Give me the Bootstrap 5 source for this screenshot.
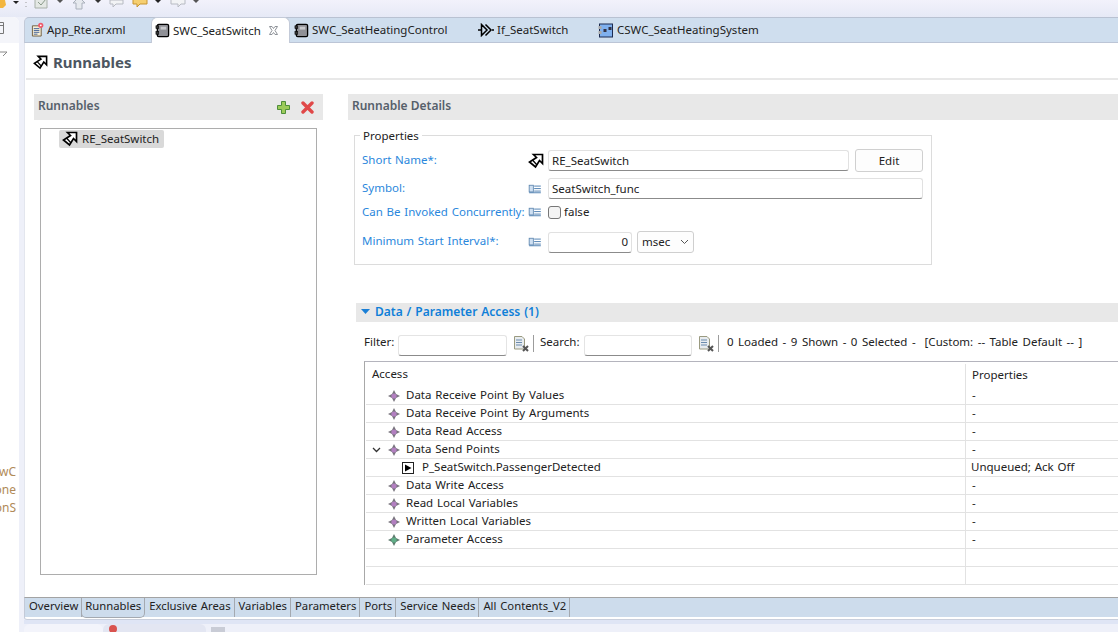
<!DOCTYPE html>
<html lang="en"><head><meta charset="utf-8"><title>Runnables</title>
<link href="https://cdn.jsdelivr.net/npm/bootstrap@5.3.0/dist/css/bootstrap.min.css" rel="stylesheet">
<style>
html,body{height:632px;overflow:hidden}
body{background:#eef0f9;font-family:"Noto Sans","Liberation Sans",sans-serif;font-size:11.5px;word-spacing:.8px;line-height:18px;color:#222;width:1118px}
.tool-strip{height:17px;background:linear-gradient(#f2f2fb,#e6e9f6);overflow:hidden}
.tool-strip svg{display:block;flex:none}
.work{height:615px}
.side{width:19px;background:#fff;border-radius:0 6px 0 0;flex:none}
.side-head{height:26px;background:#f4f5fa;border-radius:0 6px 0 0;padding-top:5px}
.side-txt{color:#b08a58;margin-top:406px;font-size:12px;word-spacing:0}
.side-txt div{width:16px;overflow:hidden;white-space:nowrap;display:flex;justify-content:flex-end}
.editor{margin-left:5px;width:1094px;flex:none}
.e-tabs{height:26px;background:#cfdeee;border-top:1px solid #b9c2d2;border-bottom:1px solid #bcc5d6;border-left:1px solid #c3cad8;border-radius:5px 0 0 0;white-space:nowrap}
.e-tab{display:flex;align-items:center;height:24px;flex:none;gap:3px}
.e-tab.on{background:#fff;height:26px;margin-top:-1px;border:1px solid #c3cad8;border-bottom:0;border-radius:6px 6px 0 0}
.t1{width:126px;padding-left:6px}
.t2{width:139px;padding-left:3px}
.t3{width:188px;padding-left:4px}
.t4{width:120px}
.t5{width:200px}
.e-body{background:#fff;height:554px;border-left:1px solid #e3e6ee}
.page-head{height:37px;margin-left:1px;padding:3px 0 0 7px;border-bottom:2px solid #e8e8e8;gap:5px}
.page-title{font-size:15px;font-weight:700;color:#4c5661;line-height:20px;word-spacing:0}
.columns{padding-left:9px;padding-top:14px}
.col-left{width:289px;flex:none}
.col-right{width:770px;margin-left:25px;flex:none}
.sect-bar{height:26px;background:#e8e8e8;padding:0 9px 2px 4px;font-weight:600;color:#56606b;font-size:12px;word-spacing:0}
.bar-tools{gap:11px;padding-top:2px}
.tree-box{margin:8px 6px 0;height:447px;border:1px solid #adadad;padding:1px 18px}
.tree-sel{display:inline-flex;align-items:center;gap:4px;background:#d9d9d9;border-radius:2px;height:18px;padding:0 5px 0 3px}
.grp{position:relative;margin:15px 0 0 6px;width:578px;height:130px;border:1px solid #dcdcdc;padding:13px 8px 0 7px}
.grp-title{position:absolute;left:5px;top:-8px;background:#fff;padding:0 3px;line-height:16px}
.p-row{display:flex;align-items:center}
.p-lab{width:166px;color:#2a87dc;flex:none;white-space:nowrap;padding-bottom:2px}
.p-lab.flat{padding-bottom:0}
.p-ic{width:20px;flex:none;display:flex}
.txt-in{height:21px;border:1px solid #e1e1e1;border-bottom:1px solid #8b8b8b;border-radius:3px;padding:0 3px;display:flex;align-items:center;background:#fff}
.btn-edit{width:68px;height:23px;margin-left:6px;background:#fdfdfd;border:1px solid #d0d0d0;border-radius:3px;padding:0;font-size:11.500px;line-height:20px;color:#222}
.chk{width:13px;height:13px;background:#f4f4f4;border:1px solid #777;border-radius:3px;margin-right:3px}
.sel-box{width:57px;height:22px;margin-left:5px;border:1px solid #cfcfcf;border-radius:3px;padding:0 4px;background:#fdfdfd}
.acc-bar{margin:38px 0 0 8px;height:19px;background:#e8e8e8;padding:0 0 2px 5px;gap:5px;color:#0f7fd8;font-weight:600;font-size:12px}
.flt{margin:13px 0 0 16px;height:22px;white-space:nowrap;line-height:14px}
.lab-f{width:34px;flex:none}
.lab-s{width:44px;flex:none}
.flt-in{height:21px;border:1px solid #e4e4e4;border-bottom:1px solid #8b8b8b;border-radius:3px;flex:none}
.fw1{width:109px}
.fw2{width:108px}
.clr{margin-left:6px}
.vsep{width:1px;height:17px;background:#9c9c9c;margin:0 6px 0 4px}
.stat{padding-left:2px;word-spacing:1.5px}
.tbl{margin:4px 0 0 16px;height:224px;border-top:1px solid #b4b4bd;border-left:1px solid #a8a8a8;overflow:hidden}
.tr{display:flex;height:18px;border-bottom:1px solid #e2e2e2;margin-left:1px;line-height:15px;white-space:nowrap}
.tr.hd{height:26px;border:0}
.td1{width:599px;flex:none;display:flex;align-items:center;padding:0 0 2px 22px;gap:6px}
.td1 svg{margin-top:2px}
.td2{flex:1;border-left:1px solid #e2e2e2;padding-left:6px}
.td2.tight{padding-left:5px}
.hd .td1{padding:0 0 0 6px;line-height:24px;align-items:flex-start}
.hd .td2{margin-top:2px;line-height:22px}
.tr.first{height:17px;line-height:14px}
.tr.first .td1{padding-bottom:3px}
.twist{width:10px;margin-left:-16px;flex:none;display:flex}
.sub{padding-left:36px;gap:8px}
.b-tabs{height:20px;background:#cddcec;border-top:1px solid #a3a3a3;border-left:1px solid #c3cad8;white-space:nowrap;line-height:16px;font-size:11.300px}
.b-tab{padding:0 3px 0 4px;border-right:1px solid #a4a9b0;height:19px}
.b-tab.on{border:1px solid #a4a9b0;border-top:0;border-radius:0 0 5px 5px;padding:0 3px;height:20px;margin-left:-1px}
.b-gap{height:3px;background:#fff;border-left:1px solid #c3cad8;border-bottom:1px solid #c9cfdc;border-radius:0 0 0 5px}
.b-band{height:4px;background:#dfe5f5}
.low-tabs{height:8px;overflow:hidden}
.low-a{width:79px;height:12px;background:#f3f4fb;border-radius:6px 6px 0 0;flex:none}
.low-b{width:103px;height:12px;background:#e3e6f2;border-radius:6px 6px 0 0;flex:none;padding-left:5px}
.low-c{width:14px;height:6px;background:#c9ccd6;margin:3px 0 0 5px;flex:none}
</style></head>
<body>
<svg width="0" height="0" class="position-absolute" aria-hidden="true">
<defs>
<symbol id="ic-run" viewBox="0 0 16 16"><path d="M5.500 1.500H14.500V10.500L11.500 7.500 7.500 14 1.500 9 8.500 4.500Z" fill="#fff" stroke="#000" stroke-width="1.700" stroke-linejoin="miter"/><path d="M4.500 7 9 12" stroke="#000" stroke-width="1.200"/></symbol>
<symbol id="ic-swc" viewBox="0 0 16 16"><rect x="2.500" y="1.500" width="12" height="13" rx="1.500" fill="#8f9096" stroke="#000" stroke-width="1.400"/><rect x="6" y="4" width="6" height="3" fill="#c9cace"/><rect x="1" y="3" width="3" height="3" fill="#333" stroke="#000" stroke-width=".6"/><rect x="1" y="9" width="3" height="3" fill="#333" stroke="#000" stroke-width=".6"/></symbol>
<symbol id="ic-prop" viewBox="0 0 16 12"><rect x="1" y="1.500" width="5" height="8" fill="#cfe0f2" stroke="#5a83ad"/><path d="M7 2.500H15M7 5.500H15M7 8.500H15M1 10.500H15" stroke="#356ea6" stroke-width="1"/></symbol>
<symbol id="ic-dia" viewBox="0 0 12 12"><path d="M6 0 8 4 12 6 8 8 6 12 4 8 0 6 4 4Z" fill="#77737c"/><circle cx="6" cy="6" r="2.600" fill="#b27fc0"/></symbol>
<symbol id="ic-dig" viewBox="0 0 12 12"><path d="M6 0 8 4 12 6 8 8 6 12 4 8 0 6 4 4Z" fill="#5d7a6c"/><circle cx="6" cy="6" r="2.600" fill="#5fae87"/></symbol>
<symbol id="ic-clr" viewBox="0 0 16 17"><path d="M1.500 1.500H9L11.500 4V14H1.500Z" fill="#e8ecef" stroke="#9a9a80"/><path d="M3 5H9M3 7.500H9M3 10H9" stroke="#6b8bad"/><path d="M10 11 15 16M15 11 10 16" stroke="#555" stroke-width="2"/></symbol>
</defs>
</svg>

<div class="tool-strip d-flex align-items-start">
<svg width="220" height="17" viewBox="0 0 220 17" aria-hidden="true">
<path d="M0 0H5L6 5 3 8H0Z" fill="#f3b63f"/><path d="M13 1l3 3 3-3z" fill="#222"/><path d="M26 2v1M26 6v1" stroke="#999"/>
<path d="M35-3h12v11H35z" fill="#e4e8e4" stroke="#a8b0a8"/><path d="M38 2l3 3 5-6" stroke="#8a9a8a" fill="none"/><path d="M57 0l3 3 3-3z" fill="#555"/>
<path d="M73 3l4-4h4l4 4h-3v6h-6V3z" fill="#e6e9ee" stroke="#aab0bb"/><path d="M95 0l3 3 3-3z" fill="#333"/>
<path d="M110 0h13v4h-7l-3 3v-3h-3z" fill="#f2f3f5" stroke="#b7bac2"/>
<path d="M133-1h14v5h-7l-3 3v-3h-4z" fill="#f6cf70" stroke="#c89530"/><path d="M155 0l3 3 3-3z" fill="#222"/>
<path d="M171-1h14v5h-4l-3 3v-3h-7z" fill="#f2f3f5" stroke="#b7bac2"/><path d="M193 0l3 3 3-3z" fill="#555"/>
</svg>
</div>

<div class="work d-flex">
<div class="side">
<div class="side-head"><svg width="4" height="12" viewBox="0 0 4 12" aria-hidden="true" class="d-block"><path d="M0 .5H3.500V11.500H0M0 3.500H3.500" fill="none" stroke="#777"/></svg></div>
<svg width="8" height="6" viewBox="0 0 8 6" aria-hidden="true" class="d-block mt-2"><path d="M0 1H7L3 5" fill="none" stroke="#888"/></svg>
<div class="side-txt"><div>SwC</div><div>one</div><div>onS</div></div>
</div>
<div class="editor">
  <div class="e-tabs d-flex">
    <div class="e-tab t1"><svg width="13" height="16" viewBox="0 0 14 16" aria-hidden="true"><path d="M1.500 3.500H11V14.500H1.500Z" fill="#f6efd8" stroke="#6d5a3a"/><path d="M3 6.500H9M3 8.500H9M3 10.500H9M3 12.500H7" stroke="#3f5f96"/><circle cx="10.500" cy="3" r="2.800" fill="#ee5a6a"/><circle cx="10.500" cy="3" r="1" fill="#fff"/></svg><span>App_Rte.arxml</span></div>
    <div class="e-tab on t2"><svg width="15" height="15" aria-hidden="true"><use href="#ic-swc"/></svg><span>SWC_SeatSwitch</span><svg class="ms-1" width="11" height="11" viewBox="0 0 11 11" aria-hidden="true"><path d="M1.500 1.500 4 1.500 5.500 3.500 7 1.500 9.500 1.500 7 5.500 9.500 9.500 7 9.500 5.500 7.500 4 9.500 1.500 9.500 4 5.500Z" fill="#fff" stroke="#8e9298"/></svg></div>
    <div class="e-tab t3"><svg width="15" height="15" aria-hidden="true"><use href="#ic-swc"/></svg><span>SWC_SeatHeatingControl</span></div>
    <div class="e-tab t4"><svg width="16" height="14" viewBox="0 0 16 14" aria-hidden="true"><path d="M0 7H3M14 7H16M3.500 1.500 9 7 3.500 12.500ZM7.500 1.500 13 7 7.500 12.500" fill="none" stroke="#000" stroke-width="1.500"/></svg><span>If_SeatSwitch</span></div>
    <div class="e-tab t5"><svg width="16" height="15" viewBox="0 0 15 15" aria-hidden="true"><rect x="1" y="1" width="13" height="13" fill="#7fb0ee" stroke="#1c2a50"/><rect x="0" y="3" width="3" height="3" fill="#aaa"/><rect x="0" y="8" width="3" height="3" fill="#aaa"/><rect x="5" y="6" width="3" height="3" fill="#334"/><rect x="10" y="4" width="3" height="3" fill="#334"/></svg><span>CSWC_SeatHeatingSystem</span></div>
  </div>
  <div class="e-body">
    <div class="page-head d-flex align-items-center">
      <svg width="15" height="15" aria-hidden="true"><use href="#ic-run"/></svg><span class="page-title">Runnables</span>
    </div>
    <div class="columns d-flex">
      <div class="col-left">
        <div class="sect-bar d-flex align-items-center justify-content-between">
          <span>Runnables</span>
          <span class="bar-tools d-flex align-items-center">
            <svg width="13" height="13" viewBox="0 0 13 13" aria-hidden="true"><path d="M4.500 .5H8.500V4.500H12.500V8.500H8.500V12.500H4.500V8.500H.5V4.500H4.500Z" fill="#9ccb5a" stroke="#4f8e3a"/></svg>
            <svg width="13" height="13" viewBox="0 0 13 13" aria-hidden="true"><path d="M2 2 11 11M11 2 2 11" stroke="#e04848" stroke-width="3.400" stroke-linecap="round"/></svg>
          </span>
        </div>
        <div class="tree-box"><span class="tree-sel"><svg width="16" height="16" aria-hidden="true"><use href="#ic-run"/></svg>RE_SeatSwitch</span></div>
      </div>
      <div class="col-right">
        <div class="sect-bar d-flex align-items-center"><span>Runnable Details</span></div>
        <div class="grp">
          <span class="grp-title">Properties</span>
          <div class="p-row"><span class="p-lab">Short Name*:</span><span class="p-ic"><svg width="16" height="16" aria-hidden="true"><use href="#ic-run"/></svg></span><div class="txt-in" style="width:301px">RE_SeatSwitch</div><button class="btn-edit" type="button">Edit</button></div>
          <div class="p-row" style="margin-top:6px"><span class="p-lab">Symbol:</span><span class="p-ic"><svg width="14" height="10" aria-hidden="true"><use href="#ic-prop"/></svg></span><div class="txt-in" style="width:375px">SeatSwitch_func</div></div>
          <div class="p-row" style="margin-top:4px"><span class="p-lab flat">Can Be Invoked Concurrently:</span><span class="p-ic"><svg width="14" height="10" aria-hidden="true"><use href="#ic-prop"/></svg></span><span class="chk"></span><span>false</span></div>
          <div class="p-row" style="margin-top:10px"><span class="p-lab">Minimum Start Interval*:</span><span class="p-ic"><svg width="14" height="10" aria-hidden="true"><use href="#ic-prop"/></svg></span><div class="txt-in justify-content-end" style="width:84px">0</div><div class="sel-box d-flex align-items-center justify-content-between"><span>msec</span><svg width="9" height="6" viewBox="0 0 9 6" aria-hidden="true"><path d="M1 1 4.500 4.500 8 1" fill="none" stroke="#555"/></svg></div></div>
        </div>
        <div class="acc-bar d-flex align-items-center">
          <svg width="9" height="5" viewBox="0 0 9 5" aria-hidden="true"><path d="M0 0H9L4.500 5Z" fill="#1a7fd6"/></svg><span>Data / Parameter Access (1)</span>
        </div>
        <div class="flt d-flex align-items-start">
          <span class="lab-f">Filter:</span><span class="flt-in fw1"></span>
          <svg class="clr" width="16" height="17" aria-hidden="true"><use href="#ic-clr"/></svg><span class="vsep"></span>
          <span class="lab-s">Search:</span><span class="flt-in fw2"></span>
          <svg class="clr" width="16" height="17" aria-hidden="true"><use href="#ic-clr"/></svg><span class="vsep"></span>
          <span class="stat">0 Loaded - 9 Shown - 0 Selected -&nbsp; [Custom: -- Table Default -- ]</span>
        </div>
        <div class="tbl">
          <div class="tr hd"><div class="td1">Access</div><div class="td2">Properties</div></div>
          <div class="tr first"><div class="td1"><svg width="12" height="12" aria-hidden="true"><use href="#ic-dia"/></svg>Data Receive Point By Values</div><div class="td2">-</div></div>
          <div class="tr"><div class="td1"><svg width="12" height="12" aria-hidden="true"><use href="#ic-dia"/></svg>Data Receive Point By Arguments</div><div class="td2">-</div></div>
          <div class="tr"><div class="td1"><svg width="12" height="12" aria-hidden="true"><use href="#ic-dia"/></svg>Data Read Access</div><div class="td2">-</div></div>
          <div class="tr"><div class="td1"><span class="twist"><svg width="9" height="6" viewBox="0 0 9 6" aria-hidden="true"><path d="M1 1 4.500 4.500 8 1" fill="none" stroke="#333" stroke-width="1.300"/></svg></span><svg width="12" height="12" aria-hidden="true"><use href="#ic-dia"/></svg>Data Send Points</div><div class="td2">-</div></div>
          <div class="tr"><div class="td1 sub"><svg width="12" height="12" viewBox="0 0 12 12" aria-hidden="true"><rect x=".5" y=".5" width="11" height="11" fill="#fff" stroke="#222"/><path d="M3 2.500 9.500 6 3 9.500Z" fill="#000"/></svg>P_SeatSwitch.PassengerDetected</div><div class="td2 tight">Unqueued; Ack Off</div></div>
          <div class="tr"><div class="td1"><svg width="12" height="12" aria-hidden="true"><use href="#ic-dia"/></svg>Data Write Access</div><div class="td2">-</div></div>
          <div class="tr"><div class="td1"><svg width="12" height="12" aria-hidden="true"><use href="#ic-dia"/></svg>Read Local Variables</div><div class="td2">-</div></div>
          <div class="tr"><div class="td1"><svg width="12" height="12" aria-hidden="true"><use href="#ic-dia"/></svg>Written Local Variables</div><div class="td2">-</div></div>
          <div class="tr"><div class="td1"><svg width="12" height="12" aria-hidden="true"><use href="#ic-dig"/></svg>Parameter Access</div><div class="td2">-</div></div>
          <div class="tr"><div class="td1"></div><div class="td2"></div></div>
          <div class="tr"><div class="td1"></div><div class="td2"></div></div>
        </div>
      </div>
    </div>
  </div>
  <div class="b-tabs d-flex">
    <span class="b-tab">Overview</span><span class="b-tab on">Runnables</span><span class="b-tab">Exclusive Areas</span><span class="b-tab">Variables</span><span class="b-tab">Parameters</span><span class="b-tab">Ports</span><span class="b-tab">Service Needs</span><span class="b-tab">All Contents_V2</span>
  </div>
  <div class="b-gap"></div>
  <div class="b-band"></div>
  <div class="low-tabs d-flex"><span class="low-a"></span><span class="low-b"><svg width="10" height="8" viewBox="0 0 10 8" aria-hidden="true" class="d-block"><circle cx="5" cy="5" r="4" fill="#d9534f"/></svg></span><span class="low-c"></span></div>
</div>
</div>
</body></html>
